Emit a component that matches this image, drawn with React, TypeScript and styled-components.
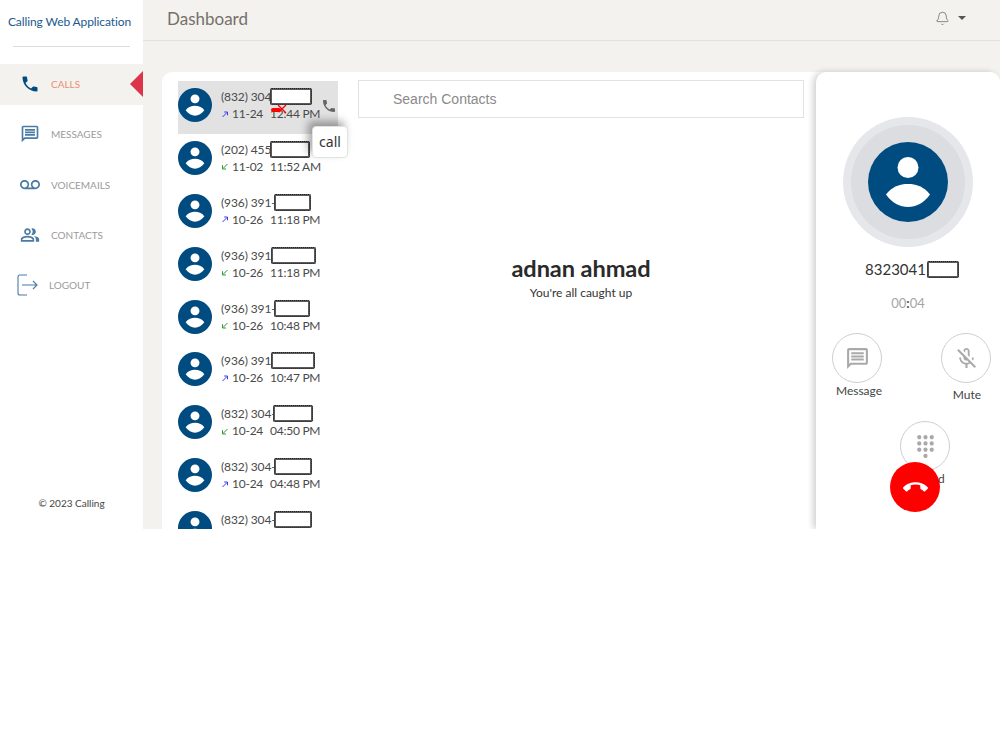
import React from "react";
import styled, { createGlobalStyle } from "styled-components";
import { MdPhone, MdOutlineMessage, MdOutlineVoicemail, MdOutlinePeopleAlt, MdCallEnd, MdDialpad, MdOutlineMicOff } from "react-icons/md";
import { Bell } from "lucide-react";

const Global = createGlobalStyle`
  html, body { margin: 0; padding: 0; background: #fff; }
  body { font-family: Lato, "Liberation Sans", sans-serif; }
  * { box-sizing: border-box; }
`;

const Page = styled.div`
  display: flex;
  height: 529px;
  overflow: hidden;
  background: #f3f2ee;
`;

const Sidebar = styled.aside`
  position: relative;
  width: 143px;
  flex: none;
  background: #fff;
  display: flex;
  flex-direction: column;
`;

const Brand = styled.div`
  height: 47px;
  margin: 0 13px;
  padding: 14px 4px 0 0;
  border-bottom: 1px solid #dcdcdc;
  display: flex;
  justify-content: center;
  white-space: nowrap;
  font-size: 12px;
  letter-spacing: -0.1px;
  line-height: 16px;
  color: #1a5a8c;
`;

const Nav = styled.nav`
  margin-top: 17px;
  display: flex;
  flex-direction: column;
  gap: 9.3px;
`;

const NavItem = styled.div<{ $active?: boolean; $gap?: number }>`
  position: relative;
  height: 41px;
  display: flex;
  align-items: center;
  padding-left: ${(p) => (p.$gap ? 17 : 20)}px;
  gap: ${(p) => p.$gap ?? 11}px;
  font-size: 10px;
  padding-bottom: 1px;
  text-transform: uppercase;
  color: ${(p) => (p.$active ? "#ef8d6e" : "#9b9b9b")};
  background: ${(p) => (p.$active ? "#f3f2ee" : "transparent")};
  svg { flex: none; color: ${(p) => (p.$active ? "#004b80" : "#4a7ba5")}; }
`;

const ActiveMark = styled.span`
  position: absolute;
  right: 0;
  top: 7px;
  width: 0;
  height: 0;
  border-top: 13px solid transparent;
  border-bottom: 13px solid transparent;
  border-right: 13px solid #dc3449;
`;

const Copyright = styled.div`
  margin-top: auto;
  margin-bottom: 19px;
  text-align: center;
  font-size: 10px;
  line-height: 14px;
  color: #444;
`;

const Main = styled.main`
  flex: 1;
  min-width: 0;
  display: flex;
  flex-direction: column;
`;

const Header = styled.header`
  height: 41px;
  flex: none;
  border-bottom: 1px solid #e4e2de;
  display: flex;
  align-items: center;
  padding: 0 34px 4px 24px;
  font-size: 17px;
  color: #75706a;
`;

const Title = styled.div`
  flex: 1;
`;

const BellWrap = styled.div`
  display: flex;
  align-items: center;
  gap: 8px;
  color: #666;
`;

const Caret = styled.span`
  width: 0;
  height: 0;
  border-left: 4px solid transparent;
  border-right: 4px solid transparent;
  border-top: 4px solid #555;
`;

const Card = styled.section`
  flex: 1;
  min-height: 0;
  margin: 31px 0 0 19px;
  background: #fff;
  border-radius: 10px 10px 0 0;
  display: flex;
`;

const ListCol = styled.div`
  width: 176px;
  flex: none;
  margin-left: 16px;
  padding-top: 9px;
  overflow: hidden;
`;

const Row = styled.div<{ $active?: boolean }>`
  position: relative;
  width: 160px;
  height: 52.875px;
  padding-top: 7px;
  display: flex;
  align-items: flex-start;
  gap: 9px;
  background: ${(p) => (p.$active ? "#e2e2e2" : "transparent")};
`;

const Texts = styled.div`
  font-size: 12px;
  letter-spacing: -0.1px;
  line-height: 17px;
  color: #4a4a4a;
  white-space: nowrap;
`;

const Line = styled.div`
  display: flex;
  align-items: center;
  height: 17px;
`;

const MetaLine = styled(Line)`
  letter-spacing: -0.25px;
`;

const Scribble = styled.span<{ $w: number; $ml: number }>`
  display: inline-block;
  flex: none;
  width: ${(p) => p.$w}px;
  height: 17px;
  margin-left: ${(p) => p.$ml}px;
  background: #fff;
  border: 2px solid #5a5a5a;
  border-radius: 2px;
  outline: 1px dotted #222;
  outline-offset: -1.5px;
`;

const DateText = styled.span`
  width: 38px;
`;

const RowCall = styled.span`
  position: absolute;
  left: 143px;
  top: 17px;
  display: flex;
  color: #666;
`;

const Cross = styled.svg`
  position: absolute;
  left: 92px;
  top: 22px;
`;

const Tooltip = styled.div`
  position: absolute;
  left: 134px;
  top: 45px;
  z-index: 2;
  width: 36px;
  height: 32px;
  padding-bottom: 2px;
  display: flex;
  align-items: center;
  justify-content: center;
  background: #fff;
  border: 1px solid #e2e2e2;
  border-radius: 4px;
  box-shadow: -4px -5px 9px rgba(0, 0, 0, 0.35);
  font-family: "Noto Sans", sans-serif;
  font-size: 14px;
  color: #333;
`;

const CenterCol = styled.div`
  flex: 1;
  min-width: 0;
  margin-left: 4px;
  padding: 8px 12px 0 0;
  display: flex;
  flex-direction: column;
  align-items: center;
`;

const Search = styled.input`
  width: 100%;
  height: 38px;
  flex: none;
  border: 1px solid #e2e2e2;
  outline: none;
  padding-left: 34px;
  font-family: "Liberation Sans", Arial, sans-serif;
  font-size: 14px;
  &::placeholder { color: #8a8a8a; opacity: 1; }
`;

const Name = styled.div`
  margin-top: 136px;
  font-size: 23.6px;
  letter-spacing: -0.1px;
  line-height: 28px;
  font-weight: 700;
  color: #2a2a2a;
`;

const Sub = styled.div`
  margin-top: 3px;
  font-size: 12px;
  line-height: 16px;
  color: #333;
`;

const CallPanel = styled.aside`
  position: relative;
  width: 184px;
  flex: none;
  background: #fff;
  border-radius: 10px 10px 0 0;
  box-shadow: -3px 0 6px rgba(0, 0, 0, 0.18);
  padding-top: 45px;
  display: flex;
  flex-direction: column;
  align-items: center;
`;

const Halo = styled.div`
  width: 130px;
  height: 130px;
  border-radius: 50%;
  background: #e5e7ea;
  padding-bottom: 1px;
  display: flex;
  align-items: center;
  justify-content: center;
`;

const HaloInner = styled.div`
  width: 114px;
  height: 114px;
  border-radius: 50%;
  background: #dcdde1;
  display: flex;
  align-items: center;
  justify-content: center;
`;

const Number_ = styled.div`
  margin: 12px 0 0 8px;
  display: flex;
  align-items: center;
  height: 20px;
  font-size: 15px;
  color: #333;
`;

const Timer = styled.div`
  margin-top: 15px;
  font-size: 13px;
  line-height: 18px;
  color: #a5a5a5;
  b { color: #555; font-weight: 700; }
`;

const ActionRow = styled.div`
  align-self: stretch;
  margin-top: 21px;
  padding: 0 9px 0 16px;
  display: flex;
  justify-content: space-between;
`;

const Action = styled.div<{ $labelGap?: number }>`
  width: 50px;
  display: flex;
  flex-direction: column;
  align-items: center;
  gap: ${(p) => p.$labelGap ?? 0}px;
  font-size: 12px;
  line-height: 16px;
  color: #444;
  white-space: nowrap;
`;

const ActionLabel = styled.span<{ $shift?: number }>`
  margin-left: ${(p) => p.$shift ?? 0}px;
`;

const Round = styled.div`
  width: 50px;
  height: 50px;
  border-radius: 50%;
  border: 1px solid #cfcfcf;
  display: flex;
  align-items: center;
  justify-content: center;
  color: #a9a9a9;
  background: #fff;
`;

const KeypadRow = styled.div`
  margin-top: 18px;
  margin-left: 34px;
`;

const EndButton = styled.div`
  position: absolute;
  left: 74px;
  top: 390px;
  width: 50px;
  height: 50px;
  border-radius: 50%;
  background: #ff0000;
  color: #fff;
  display: flex;
  align-items: center;
  justify-content: center;
`;

const AvatarIcon = styled.svg`
  flex: none;
  display: block;
`;

const ArrowIcon = styled.svg`
  flex: none;
  margin-right: 3px;
`;

const Avatar = ({ size }: { size: number }) => (
  <AvatarIcon width={size} height={size} viewBox="0 0 80 80">
    <circle cx="40" cy="40" r="40" fill="#004b80" />
    <circle cx="40" cy="25.5" r="10.5" fill="#fff" />
    <path d="M18 52.5 C24 44.5 32 42 40 42 C48 42 56 44.5 62 52.5 C56 61 48 65 40 65 C32 65 24 61 18 52.5 Z" fill="#fff" />
  </AvatarIcon>
);

const Arrow = ({ out }: { out: boolean }) => (
  <ArrowIcon width="8" height="8" viewBox="0 0 8 8">
    {out ? (
      <path d="M1.5 7 L6 2.5 M3.2 2 H6.5 V5.3" stroke="#3a3af0" strokeWidth="1" fill="none" />
    ) : (
      <path d="M6.5 2 L2 6.5 M1.5 3.2 V7 H5" stroke="#2e9a2e" strokeWidth="1" fill="none" />
    )}
  </ArrowIcon>
);

const LogoutIcon = () => (
  <svg width="22" height="22" viewBox="0 0 22 22" fill="none" stroke="#4a7ba5" strokeWidth="1.1">
    <path d="M10 1 H3 Q1 1 1 3 V19 Q1 21 3 21 H10" />
    <path d="M5 11 H20 M16 7 L20 11 L16 15" />
  </svg>
);

const calls = [
  { num: "(832) 304", w: 42, ml: -1, out: true, date: "11-24", time: "12:44 PM" },
  { num: "(202) 455", w: 40, ml: -1, out: false, date: "11-02", time: "11:52 AM" },
  { num: "(936) 391-", w: 37, ml: -2, out: true, date: "10-26", time: "11:18 PM" },
  { num: "(936) 391", w: 45, ml: 0, out: false, date: "10-26", time: "11:18 PM" },
  { num: "(936) 391-", w: 36, ml: -2, out: false, date: "10-26", time: "10:48 PM" },
  { num: "(936) 391", w: 44, ml: 0, out: true, date: "10-26", time: "10:47 PM" },
  { num: "(832) 304-", w: 40, ml: -3, out: false, date: "10-24", time: "04:50 PM" },
  { num: "(832) 304-", w: 38, ml: -2, out: true, date: "10-24", time: "04:48 PM" },
  { num: "(832) 304-", w: 38, ml: -2, out: true },
];

export default function App() {
  return (
    <Page>
      <Global />
      <Sidebar>
        <Brand>Calling Web Application</Brand>
        <Nav>
          <NavItem $active>
            <MdPhone size={20} />
            CALLS
            <ActiveMark />
          </NavItem>
          <NavItem>
            <MdOutlineMessage size={20} />
            Messages
          </NavItem>
          <NavItem>
            <MdOutlineVoicemail size={20} />
            Voicemails
          </NavItem>
          <NavItem>
            <MdOutlinePeopleAlt size={20} />
            Contacts
          </NavItem>
          <NavItem $gap={10}>
            <LogoutIcon />
            Logout
          </NavItem>
        </Nav>
        <Copyright>© 2023 Calling</Copyright>
      </Sidebar>
      <Main>
        <Header>
          <Title>Dashboard</Title>
          <BellWrap>
            <Bell size={15} strokeWidth={1.2} />
            <Caret />
          </BellWrap>
        </Header>
        <Card>
          <ListCol>
            {calls.map((c, i) => (
              <Row key={i} $active={i === 0}>
                <Avatar size={34} />
                <Texts>
                  <Line>
                    {c.num}
                    <Scribble $w={c.w} $ml={c.ml} />
                  </Line>
                  {c.date && (
                    <MetaLine>
                      <Arrow out={c.out} />
                      <DateText>{c.date}</DateText>
                      {c.time}
                    </MetaLine>
                  )}
                </Texts>
                {i === 0 && (
                  <>
                    <Cross width="20" height="12" viewBox="0 0 20 12">
                      <path d="M8 2 L16 10 M16 2 L9 9" stroke="#f00" strokeWidth="1.3" fill="none" />
                      <rect x="1" y="5" width="10" height="4" rx="2" fill="#f00" />
                    </Cross>
                    <RowCall>
                      <MdPhone size={16} />
                    </RowCall>
                    <Tooltip>call</Tooltip>
                  </>
                )}
              </Row>
            ))}
          </ListCol>
          <CenterCol>
            <Search placeholder="Search Contacts" readOnly />
            <Name>adnan ahmad</Name>
            <Sub>You're all caught up</Sub>
          </CenterCol>
          <CallPanel>
            <Halo>
              <HaloInner>
                <Avatar size={80} />
              </HaloInner>
            </Halo>
            <Number_>
              8323041
              <Scribble $w={32} $ml={1} />
            </Number_>
            <Timer>
              00<b>:</b>04
            </Timer>
            <ActionRow>
              <Action>
                <Round>
                  <MdOutlineMessage size={25} />
                </Round>
                <ActionLabel $shift={4}>Message</ActionLabel>
              </Action>
              <Action $labelGap={4}>
                <Round>
                  <MdOutlineMicOff size={25} />
                </Round>
                <ActionLabel $shift={2}>Mute</ActionLabel>
              </Action>
            </ActionRow>
            <KeypadRow>
              <Action>
                <Round>
                  <MdDialpad size={25} />
                </Round>
                <ActionLabel>Keypad</ActionLabel>
              </Action>
            </KeypadRow>
            <EndButton>
              <MdCallEnd size={25} />
            </EndButton>
          </CallPanel>
        </Card>
      </Main>
    </Page>
  );
}
